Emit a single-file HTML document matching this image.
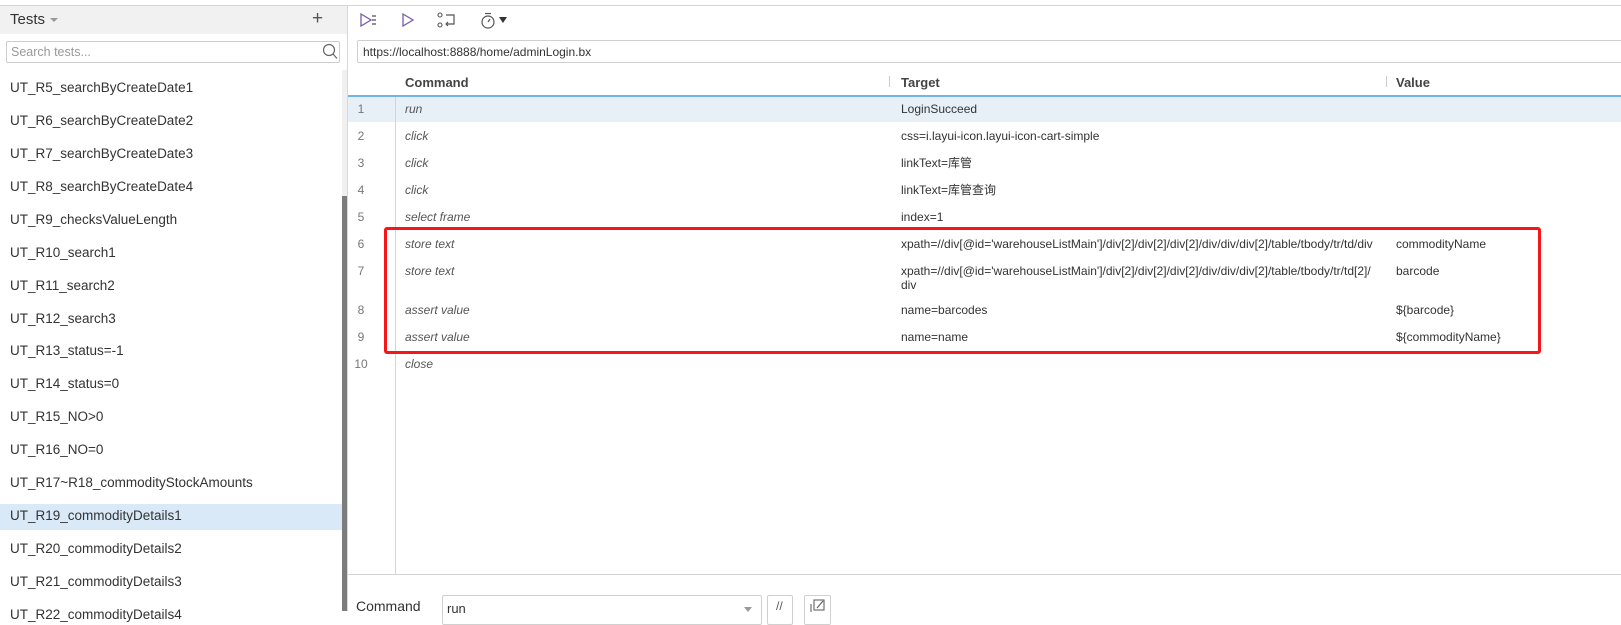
<!DOCTYPE html>
<html><head><meta charset="utf-8"><style>
*{margin:0;padding:0;box-sizing:border-box}
body{width:1621px;height:611px;overflow:hidden;background:#fff;font-family:"Liberation Sans","Noto Sans CJK SC",sans-serif;color:#333;position:relative}
.a{position:absolute}
.li{position:absolute;left:10px;font-size:13.5px;color:#333;line-height:16px}
.c{position:absolute;font-size:12px;line-height:14px;color:#333}
.i{font-style:italic;color:#555}
.n{color:#777;text-align:center}
</style></head><body>
<div class="a" style="left:0;top:5px;width:1621px;height:1px;background:#d4d4d4"></div>
<!-- left panel -->
<div class="a" style="left:0;top:6px;width:347px;height:28px;background:#f1f1f1"></div>
<div class="a" style="left:10px;top:11px;font-size:15px;color:#333">Tests</div>
<div class="a" style="left:50px;top:18px;width:0;height:0;border-left:4px solid transparent;border-right:4px solid transparent;border-top:4px solid #999"></div>
<div class="a" style="left:312px;top:8px;font-size:19px;color:#555;font-weight:300">+</div>
<div class="a" style="left:6px;top:41px;width:334px;height:22px;border:1px solid #ccc;border-radius:2px"></div>
<div class="a" style="left:11px;top:45px;font-size:12.5px;color:#999">Search tests...</div>
<svg class="a" style="left:322px;top:43px" width="17" height="18"><circle cx="7" cy="7" r="5.5" fill="none" stroke="#666" stroke-width="1.2"/><line x1="11" y1="11" x2="15" y2="15.5" stroke="#666" stroke-width="1.2"/></svg>
<div class="a" style="left:342px;top:70px;width:5px;height:541px;background:#f0f0f0"></div>
<div class="a" style="left:342px;top:196px;width:5px;height:415px;background:#7c7c7c"></div>
<div class="a" style="left:347px;top:5px;width:1px;height:606px;background:#d8d8d8"></div>
<div class="a" style="left:0;top:504px;width:342px;height:26px;background:#d9e9f7"></div>
<div class="li" style="top:80px">UT_R5_searchByCreateDate1</div>
<div class="li" style="top:113px">UT_R6_searchByCreateDate2</div>
<div class="li" style="top:146px">UT_R7_searchByCreateDate3</div>
<div class="li" style="top:179px">UT_R8_searchByCreateDate4</div>
<div class="li" style="top:212px">UT_R9_checksValueLength</div>
<div class="li" style="top:245px">UT_R10_search1</div>
<div class="li" style="top:278px">UT_R11_search2</div>
<div class="li" style="top:311px">UT_R12_search3</div>
<div class="li" style="top:343px">UT_R13_status=-1</div>
<div class="li" style="top:376px">UT_R14_status=0</div>
<div class="li" style="top:409px">UT_R15_NO&gt;0</div>
<div class="li" style="top:442px">UT_R16_NO=0</div>
<div class="li" style="top:475px">UT_R17~R18_commodityStockAmounts</div>
<div class="li" style="top:508px">UT_R19_commodityDetails1</div>
<div class="li" style="top:541px">UT_R20_commodityDetails2</div>
<div class="li" style="top:574px">UT_R21_commodityDetails3</div>
<div class="li" style="top:607px">UT_R22_commodityDetails4</div>
<!-- toolbar -->
<svg class="a" style="left:358px;top:12px" width="160" height="18">
<path d="M3 2 L13 8 L3 14 Z" fill="none" stroke="#7a5ca8" stroke-width="1.3"/>
<line x1="14" y1="4" x2="18" y2="4" stroke="#555" stroke-width="1.3"/><line x1="14" y1="8" x2="18" y2="8" stroke="#555" stroke-width="1.3"/><line x1="14" y1="12" x2="18" y2="12" stroke="#555" stroke-width="1.3"/>
<path d="M45 2 L55 8 L45 14 Z" fill="none" stroke="#7a5ca8" stroke-width="1.3"/>
<circle cx="82" cy="3" r="2" fill="none" stroke="#555" stroke-width="1.1"/><circle cx="82" cy="13" r="2" fill="none" stroke="#555" stroke-width="1.1"/>
<path d="M88 3 H96 V12 H88 M90 10 L88 12 L90 14" fill="none" stroke="#555" stroke-width="1.2"/>
<circle cx="130" cy="10" r="6" fill="none" stroke="#555" stroke-width="1.2"/><line x1="127" y1="1.5" x2="133" y2="1.5" stroke="#555" stroke-width="1.2"/><line x1="130" y1="10" x2="132" y2="7" stroke="#555" stroke-width="1.2"/>
<path d="M141 5 H149 L145 11 Z" fill="#333"/>
</svg>
<!-- url -->
<div class="a" style="left:357px;top:40px;width:1270px;height:23px;border:1px solid #d0d0d0;border-radius:2px"></div>
<div class="a" style="left:363px;top:45px;font-size:12px">https://localhost:8888/home/adminLogin.bx</div>
<!-- table header -->
<div class="a" style="left:405px;top:75px;font-size:13px;font-weight:bold;color:#444">Command</div>
<div class="a" style="left:889px;top:76px;width:1px;height:11px;background:#ccc"></div>
<div class="a" style="left:901px;top:75px;font-size:13px;font-weight:bold;color:#444">Target</div>
<div class="a" style="left:1386px;top:76px;width:1px;height:11px;background:#ccc"></div>
<div class="a" style="left:1396px;top:75px;font-size:13px;font-weight:bold;color:#444">Value</div>
<div class="a" style="left:348px;top:95px;width:1273px;height:2px;background:#74b4ea"></div>
<div class="a" style="left:348px;top:97px;width:1273px;height:25px;background:#e7eff7"></div>
<div class="a" style="left:395px;top:97px;width:1px;height:477px;background:#d4d4d4"></div>
<div class="a" style="left:348px;top:574px;width:1273px;height:1px;background:#d4d4d4"></div>
<!-- rows -->
<div class="c n" style="left:351px;width:20px;top:102px">1</div><div class="c i" style="left:405px;top:102px">run</div><div class="c" style="left:901px;top:102px">LoginSucceed</div>
<div class="c n" style="left:351px;width:20px;top:129px">2</div><div class="c i" style="left:405px;top:129px">click</div><div class="c" style="left:901px;top:129px">css=i.layui-icon.layui-icon-cart-simple</div>
<div class="c n" style="left:351px;width:20px;top:156px">3</div><div class="c i" style="left:405px;top:156px">click</div><div class="c" style="left:901px;top:156px">linkText=库管</div>
<div class="c n" style="left:351px;width:20px;top:183px">4</div><div class="c i" style="left:405px;top:183px">click</div><div class="c" style="left:901px;top:183px">linkText=库管查询</div>
<div class="c n" style="left:351px;width:20px;top:210px">5</div><div class="c i" style="left:405px;top:210px">select frame</div><div class="c" style="left:901px;top:210px">index=1</div>
<div class="c n" style="left:351px;width:20px;top:237px">6</div><div class="c i" style="left:405px;top:237px">store text</div><div class="c" style="left:901px;top:237px">xpath=//div[@id='warehouseListMain']/div[2]/div[2]/div[2]/div/div/div[2]/table/tbody/tr/td/div</div><div class="c" style="left:1396px;top:237px">commodityName</div>
<div class="c n" style="left:351px;width:20px;top:264px">7</div><div class="c i" style="left:405px;top:264px">store text</div><div class="c" style="left:901px;top:264px">xpath=//div[@id='warehouseListMain']/div[2]/div[2]/div[2]/div/div/div[2]/table/tbody/tr/td[2]/<br>div</div><div class="c" style="left:1396px;top:264px">barcode</div>
<div class="c n" style="left:351px;width:20px;top:303px">8</div><div class="c i" style="left:405px;top:303px">assert value</div><div class="c" style="left:901px;top:303px">name=barcodes</div><div class="c" style="left:1396px;top:303px">${barcode}</div>
<div class="c n" style="left:351px;width:20px;top:330px">9</div><div class="c i" style="left:405px;top:330px">assert value</div><div class="c" style="left:901px;top:330px">name=name</div><div class="c" style="left:1396px;top:330px">${commodityName}</div>
<div class="c n" style="left:351px;width:20px;top:357px">10</div><div class="c i" style="left:405px;top:357px">close</div>
<!-- red box -->
<div class="a" style="left:384px;top:227px;width:1157px;height:127px;border:3px solid #f5161a;border-radius:3px"></div>
<!-- bottom -->
<div class="a" style="left:356px;top:598px;font-size:14px;color:#333">Command</div>
<div class="a" style="left:442px;top:595px;width:320px;height:30px;border:1px solid #d0d0d0;border-radius:2px"></div>
<div class="a" style="left:447px;top:601px;font-size:13px">run</div>
<div class="a" style="left:744px;top:607px;width:0;height:0;border-left:4px solid transparent;border-right:4px solid transparent;border-top:5px solid #999"></div>
<div class="a" style="left:767px;top:595px;width:26px;height:30px;border:1px solid #d0d0d0;border-radius:2px"></div>
<div class="a" style="left:776px;top:599px;font-size:12px;color:#555">//</div>
<div class="a" style="left:804px;top:595px;width:27px;height:30px;border:1px solid #d0d0d0;border-radius:2px"></div>
<svg class="a" style="left:810px;top:598px" width="16" height="14"><rect x="4" y="2" width="10" height="10" fill="none" stroke="#555"/><line x1="7" y1="10" x2="13" y2="3" stroke="#555"/><line x1="1" y1="6" x2="1" y2="14" stroke="#555"/></svg>
</body></html>
